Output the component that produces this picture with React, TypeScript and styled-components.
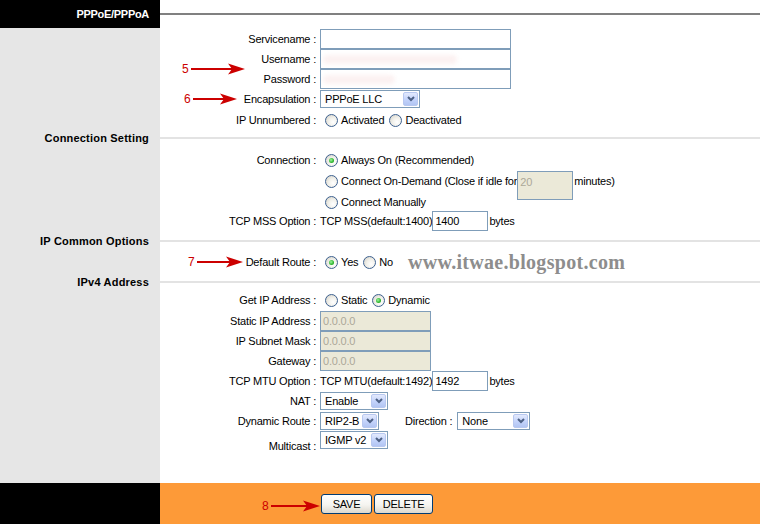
import React from "react";
import styled, { createGlobalStyle, css } from "styled-components";

const Global = createGlobalStyle`
  html, body { margin: 0; padding: 0; background: #fff; }
  body {
    width: 760px; height: 524px; overflow: hidden;
    font-family: "Liberation Sans", Arial, sans-serif; font-size: 11px; color: #000;
    letter-spacing: -0.2px;
  }
  * { box-sizing: border-box; }
`;

const Page = styled.div`
  position: relative;
  width: 760px;
  height: 524px;
  display: flex;
  flex-direction: column;
`;

const Band = styled.div<{ $h?: number; $grow?: boolean }>`
  display: grid;
  grid-template-columns: 160px 1fr;
  flex: ${(p) => (p.$grow ? "1 1 auto" : "none")};
  height: ${(p) => (p.$h ? `${p.$h}px` : "auto")};
`;

const Side = styled.div<{ $dark?: boolean }>`
  background: ${(p) => (p.$dark ? "#000" : "#e6e6e6")};
  color: ${(p) => (p.$dark ? "#fff" : "#000")};
  font-weight: bold;
  font-size: 11px;
  letter-spacing: ${(p) => (p.$dark ? "-0.3px" : "0.2px")};
  display: flex;
  align-items: center;
  justify-content: flex-end;
  padding-right: 11px;
  white-space: nowrap;
`;

const Main = styled.div<{ $align?: string; $pt?: number }>`
  background: #fff;
  display: flex;
  align-items: ${(p) => p.$align || "center"};
  padding-top: ${(p) => p.$pt || 0}px;
  min-width: 0;
`;

const HeadMain = styled(Main)`
  align-items: flex-start;
  padding-top: 13px;
`;

const Rule = styled.div<{ $head?: boolean }>`
  width: 100%;
  height: 2px;
  background: ${(p) => (p.$head ? "#808080" : "#e3e3e3")};
`;

const Label = styled.div<{ $bottom?: boolean; $lh?: number }>`
  width: 157px;
  flex: none;
  text-align: right;
  padding-right: 1px;
  white-space: nowrap;
  line-height: ${(p) => p.$lh || 13}px;
  ${(p) =>
    p.$bottom &&
    css`
      align-self: flex-end;
    `}
`;

const Content = styled.div<{ $col?: boolean; $align?: string }>`
  display: flex;
  flex-direction: ${(p) => (p.$col ? "column" : "row")};
  align-items: ${(p) => p.$align || "center"};
  padding-left: 3px;
  white-space: nowrap;
  height: 100%;
`;

const Option = styled.div<{ $h: number; $top?: boolean }>`
  display: flex;
  height: ${(p) => p.$h}px;
  align-items: ${(p) => (p.$top ? "flex-start" : "center")};
`;

const Txt = styled.span<{ $pt?: number; $ml?: number }>`
  line-height: 13px;
  padding-top: ${(p) => p.$pt || 0}px;
  margin-left: ${(p) => p.$ml || 0}px;
`;

const Radio = styled.span<{ $on?: boolean; $mt?: number }>`
  display: inline-block;
  position: relative;
  flex: none;
  width: 13px;
  height: 13px;
  border-radius: 50%;
  border: 1px solid #3d6190;
  margin: ${(p) => p.$mt || 0}px 3px 0 5px;
  background: radial-gradient(circle at 65% 65%, #ffffff 0%, #f1f0ea 45%, #cfccc2 100%);
  ${(p) =>
    p.$on &&
    css`
      &::after {
        content: "";
        position: absolute;
        left: 3px;
        top: 3px;
        width: 5px;
        height: 5px;
        border-radius: 50%;
        background: radial-gradient(circle at 40% 40%, #9ef59e 0%, #2eb52e 60%, #15891a 100%);
      }
    `}
`;

const Box = styled.div<{ $w: number; $h?: number; $off?: boolean; $top?: boolean }>`
  width: ${(p) => p.$w}px;
  height: ${(p) => p.$h || 20}px;
  flex: none;
  border: 1px solid #7f9db9;
  background: ${(p) => (p.$off ? "#ebe9d8" : "#fff")};
  color: ${(p) => (p.$off ? "#aca899" : "#000")};
  display: flex;
  align-items: ${(p) => (p.$top ? "flex-start" : "center")};
  padding: ${(p) => (p.$top ? "4px 2px 0" : "0 2px")};
  line-height: 13px;
  overflow: hidden;
`;

const Hidden = styled.span<{ $w: number }>`
  display: inline-block;
  width: ${(p) => p.$w}px;
  height: 9px;
  border-radius: 5px;
  background: #fcf1f1;
  filter: blur(2px);
`;

const Select = styled.div<{ $w: number; $top?: boolean }>`
  width: ${(p) => p.$w}px;
  height: 18px;
  flex: none;
  border: 1px solid #7f9db9;
  background: #fff;
  display: flex;
  align-items: center;
  padding: 0 1px 0 4px;
  ${(p) =>
    p.$top &&
    css`
      align-self: flex-start;
    `}
`;

const SelVal = styled.span`
  flex: 1 1 auto;
  line-height: 13px;
`;

const DropBtn = styled.span`
  flex: none;
  width: 15px;
  height: 14px;
  border: 1px solid #b8c8f0;
  border-radius: 2px;
  background: linear-gradient(#e3eafd, #c3d3fb 55%, #b2c5f3);
  display: flex;
  align-items: center;
  justify-content: center;
`;

const Gap = styled.span<{ $w: number }>`
  display: inline-block;
  width: ${(p) => p.$w}px;
  flex: none;
`;

const FootMain = styled(Main)`
  background: #fd9a38;
  padding-left: 161px;
  gap: 2px;
`;

const Btn = styled.button<{ $w: number }>`
  width: ${(p) => p.$w}px;
  height: 20px;
  padding: 0;
  border: 1px solid #003c74;
  border-radius: 3px;
  background: linear-gradient(#ffffff, #f5f4f0 55%, #dcd8cd);
  font-family: "Liberation Sans", Arial, sans-serif;
  font-size: 11px;
  letter-spacing: -0.2px;
  color: #000;
`;

const Note = styled.div<{ $x: number; $y: number }>`
  position: absolute;
  left: ${(p) => p.$x}px;
  top: ${(p) => p.$y - 7}px;
  height: 14px;
  display: flex;
  align-items: center;
  gap: 2px;
  color: #cc0000;
  font-size: 12px;
  letter-spacing: 0;
  line-height: 14px;
`;

const Watermark = styled.div`
  position: absolute;
  left: 408px;
  top: 251px;
  font-family: "Liberation Serif", "Times New Roman", serif;
  font-weight: bold;
  font-size: 20px;
  line-height: 22px;
  color: #8d8d8d;
  letter-spacing: 0.3px;
  white-space: nowrap;
`;

const Chevron = () => (
  <svg width="8" height="6" viewBox="0 0 8 6">
    <path d="M1 1 L4 4 L7 1" fill="none" stroke="#4d6185" strokeWidth="2" />
  </svg>
);

const Arrow = ({ w }: { w: number }) => (
  <svg width={w} height="12" viewBox={`0 0 ${w} 12`}>
    <rect x="0" y="5" width={w - 12} height="2" fill="#cc0000" />
    <path d={`M${w - 17} 0.5 L${w} 6 L${w - 17} 11.5 L${w - 13} 6 Z`} fill="#cc0000" />
  </svg>
);

const Sel = ({ w, v, top }: { w: number; v: string; top?: boolean }) => (
  <Select $w={w} $top={top}>
    <SelVal>{v}</SelVal>
    <DropBtn>
      <Chevron />
    </DropBtn>
  </Select>
);

const Row = ({
  label,
  h,
  children,
  align,
}: {
  label: string;
  h: number;
  children?: React.ReactNode;
  align?: string;
}) => (
  <Band $h={h}>
    <Side />
    <Main>
      <Label>{label}</Label>
      <Content $align={align}>{children}</Content>
    </Main>
  </Band>
);

const Section = ({ title, h }: { title: string; h: number }) => (
  <Band $h={h}>
    <Side>{title}</Side>
    <Main>
      <Rule />
    </Main>
  </Band>
);

export default function App() {
  return (
    <Page>
      <Global />
      <Band $h={28}>
        <Side $dark>PPPoE/PPPoA</Side>
        <HeadMain>
          <Rule $head />
        </HeadMain>
      </Band>
      <Band $h={1}>
        <Side />
        <Main />
      </Band>
      <Row label="Servicename :" h={20}>
        <Box $w={191} />
      </Row>
      <Row label="Username :" h={20}>
        <Box $w={191}>
          <Hidden $w={134} />
        </Box>
      </Row>
      <Row label="Password :" h={20}>
        <Box $w={191}>
          <Hidden $w={72} />
        </Box>
      </Row>
      <Row label="Encapsulation :" h={20}>
        <Sel w={100} v="PPPoE LLC" />
      </Row>
      <Row label="IP Unnumbered :" h={22}>
        <Radio />
        <Txt>Activated</Txt>
        <Radio />
        <Txt>Deactivated</Txt>
      </Row>
      <Section title="Connection Setting" h={14} />
      <Band $h={66}>
        <Side />
        <Main $align="flex-start" $pt={4}>
          <Label $lh={22}>Connection :</Label>
          <Content $col $align="flex-start">
            <Option $h={22}>
              <Radio $on />
              <Txt>Always On (Recommended)</Txt>
            </Option>
            <Option $h={22} $top>
              <Radio $mt={4} />
              <Txt $pt={4}>Connect On-Demand (Close if idle for</Txt>
              <Box $w={56} $h={29} $off $top>
                20
              </Box>
              <Txt $pt={4} $ml={1}>
                minutes)
              </Txt>
            </Option>
            <Option $h={18}>
              <Radio />
              <Txt>Connect Manually</Txt>
            </Option>
          </Content>
        </Main>
      </Band>
      <Row label="TCP MSS Option :" h={20}>
        <Txt>TCP MSS(default:1400)</Txt>
        <Box $w={56}>1400</Box>
        <Txt $ml={1}>bytes</Txt>
      </Row>
      <Section title="IP Common Options" h={20} />
      <Row label="Default Route :" h={22}>
        <Radio $on />
        <Txt>Yes</Txt>
        <Radio />
        <Txt>No</Txt>
      </Row>
      <Section title="IPv4 Address" h={17} />
      <Row label="Get IP Address :" h={21}>
        <Radio />
        <Txt>Static</Txt>
        <Radio $on />
        <Txt>Dynamic</Txt>
      </Row>
      <Row label="Static IP Address :" h={20}>
        <Box $w={111} $off>
          0.0.0.0
        </Box>
      </Row>
      <Row label="IP Subnet Mask :" h={20}>
        <Box $w={111} $off>
          0.0.0.0
        </Box>
      </Row>
      <Row label="Gateway :" h={20}>
        <Box $w={111} $off>
          0.0.0.0
        </Box>
      </Row>
      <Row label="TCP MTU Option :" h={20}>
        <Txt>TCP MTU(default:1492)</Txt>
        <Box $w={56}>1492</Box>
        <Txt $ml={1}>bytes</Txt>
      </Row>
      <Row label="NAT :" h={20}>
        <Sel w={68} v="Enable" />
      </Row>
      <Row label="Dynamic Route :" h={20}>
        <Sel w={59} v="RIP2-B" />
        <Gap $w={26} />
        <Txt>Direction :</Txt>
        <Gap $w={5} />
        <Sel w={73} v="None" />
      </Row>
      <Band $h={22}>
        <Side />
        <Main $align="flex-start">
          <Label $bottom>Multicast :</Label>
          <Content $align="flex-start">
            <Sel w={68} v="IGMP v2" />
          </Content>
        </Main>
      </Band>
      <Band $grow>
        <Side />
        <Main />
      </Band>
      <Band $h={41}>
        <Side $dark />
        <FootMain>
          <Btn $w={51}>SAVE</Btn>
          <Btn $w={59}>DELETE</Btn>
        </FootMain>
      </Band>

      <Note $x={182} $y={69}>
        <span>5</span>
        <Arrow w={54} />
      </Note>
      <Note $x={184} $y={99}>
        <span>6</span>
        <Arrow w={44} />
      </Note>
      <Note $x={188} $y={262}>
        <span>7</span>
        <Arrow w={46} />
      </Note>
      <Note $x={262} $y={506}>
        <span>8</span>
        <Arrow w={49} />
      </Note>
      <Watermark>www.itwae.blogspot.com</Watermark>
    </Page>
  );
}
